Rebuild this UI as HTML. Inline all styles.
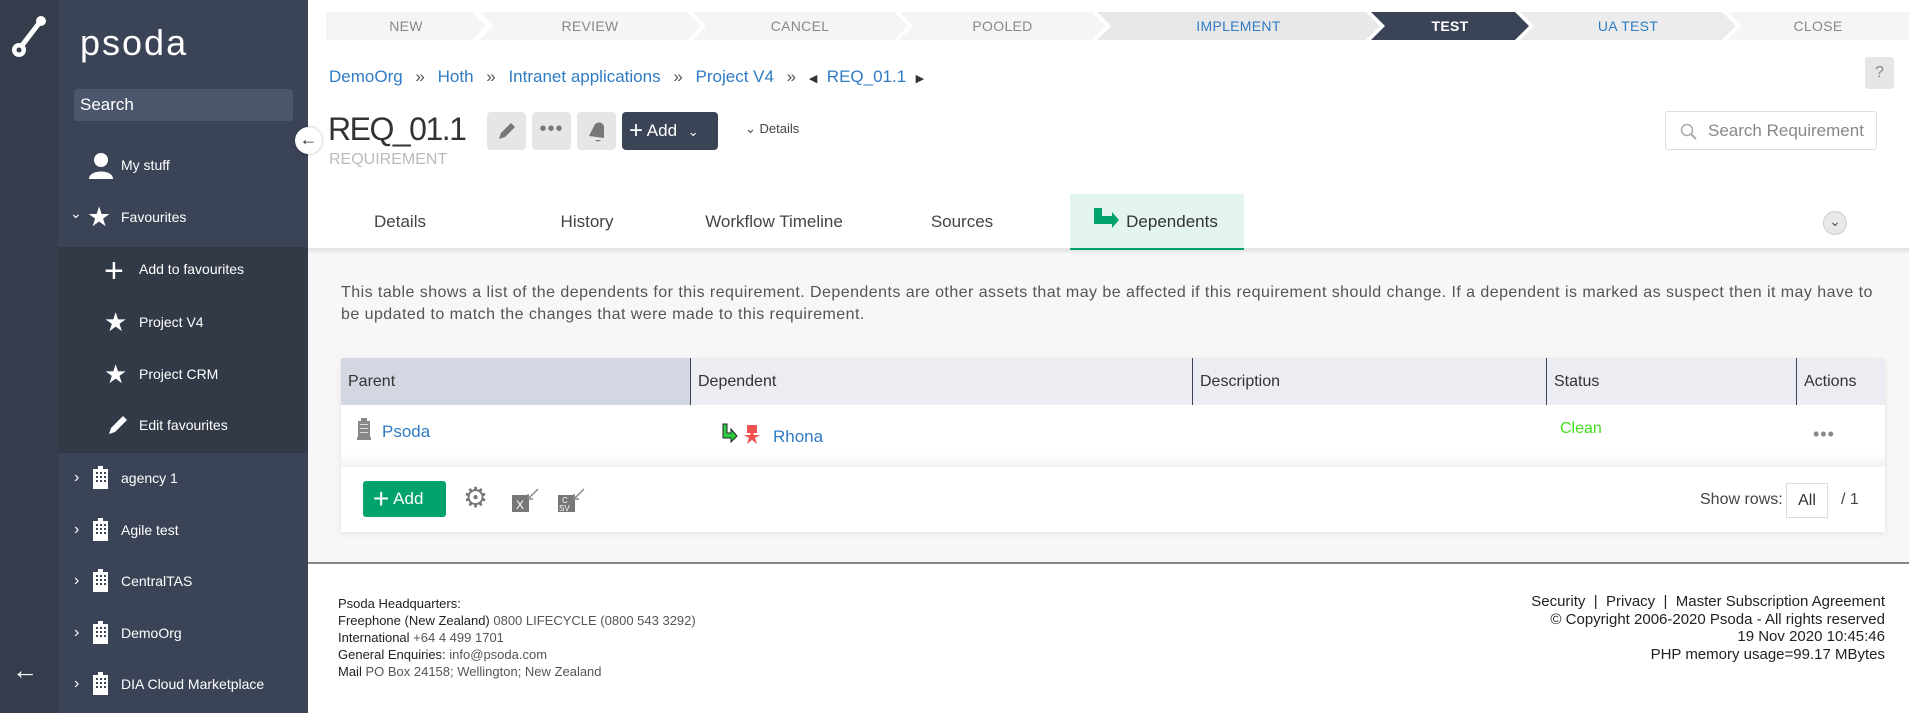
<!DOCTYPE html>
<html><head><meta charset="utf-8"><style>
*{box-sizing:border-box;margin:0;padding:0}
body{width:1909px;height:713px;overflow:hidden;position:relative;background:#fff;font-family:"Liberation Sans",sans-serif;color:#333}
.a{position:absolute}
.strip{left:0;top:0;width:58px;height:713px;background:#353c4b}
.panel{left:58px;top:0;width:250px;height:713px;background:#3b4356}
.sub{left:58px;top:247px;width:250px;height:206px;background:#323947}
.side{color:#fff;font-size:14px;white-space:nowrap}
.step{top:12px;height:28px;font-size:14px;line-height:28px;text-align:center;letter-spacing:.3px;clip-path:polygon(0 0,calc(100% - 14px) 0,100% 50%,calc(100% - 14px) 100%,0 100%,14px 50%)}
.bc{top:67px;font-size:17px;color:#2f7bc4;white-space:nowrap}
.btn{top:112px;width:39px;height:38px;background:#e6e6e6;border-radius:4px}
.tab{top:194px;height:56px;line-height:56px;font-size:17px;color:#444;text-align:center}
.th{top:358px;height:47px;line-height:47px;font-size:16px;color:#333;padding-left:7px;background:#ecedf2;border-right:1px solid #3b4356}
.ft{font-size:13px;color:#222;white-space:nowrap}
.ft span{color:#555}
.fr{right:24px;font-size:15px;color:#222;text-align:right;white-space:nowrap}
</style></head><body>
<div class="a strip"></div>
<div class="a panel"></div>
<div class="a sub"></div>
<svg class="a" style="left:8px;top:14px" width="42" height="44" viewBox="0 0 42 44"><line x1="32" y1="8" x2="12" y2="34" stroke="#fff" stroke-width="5" stroke-linecap="round"/><circle cx="33" cy="7" r="5" fill="#fff"/><circle cx="11" cy="36" r="7" fill="#fff"/><circle cx="11" cy="36" r="2.5" fill="#353c4b"/></svg>
<div class="a" style="left:80px;top:22px;font-size:36px;color:#fff;letter-spacing:2px;font-weight:normal">psoda</div>
<div class="a" style="left:74px;top:89px;width:219px;height:32px;background:#4b556b;border-radius:3px;color:#fff;font-size:17px;line-height:32px;padding-left:6px">Search</div>
<div class="a" style="left:295px;top:127px;width:27px;height:27px;border-radius:50%;background:#fff;box-shadow:0 0 3px rgba(0,0,0,.3);text-align:center;line-height:25px;font-size:18px;color:#333">←</div>
<svg class="a" style="left:88px;top:152px" width="26" height="28" viewBox="0 0 26 28"><circle cx="13" cy="8" r="7" fill="#fff"/><path d="M1 27 C1 17 25 17 25 27Z" fill="#fff"/></svg>
<div class="a side" style="left:121px;top:157px">My stuff</div>
<div class="a side" style="left:70px;top:205px;font-size:14px">⌄</div>
<div class="a side" style="left:87px;top:204px;font-size:27px;line-height:27px">★</div>
<div class="a side" style="left:121px;top:209px">Favourites</div>
<div class="a side" style="left:104px;top:254px;font-size:34px;line-height:34px;font-weight:300">+</div>
<div class="a side" style="left:139px;top:261px">Add to favourites</div>
<div class="a side" style="left:104px;top:309px;font-size:26px;line-height:26px">★</div>
<div class="a side" style="left:139px;top:314px">Project V4</div>
<div class="a side" style="left:104px;top:361px;font-size:26px;line-height:26px">★</div>
<div class="a side" style="left:139px;top:366px">Project CRM</div>
<svg class="a" style="left:106px;top:413px" width="24" height="24" viewBox="0 0 24 24"><path d="M3 21 L5 15 L17 3 L21 7 L9 19Z" fill="#fff"/></svg>
<div class="a side" style="left:139px;top:417px">Edit favourites</div>
<div class="a" style="left:0;top:0">
<div class="a side" style="left:74px;top:469px;font-size:16px">›</div><svg class="a" style="left:92px;top:466px" width="17" height="23"><rect x="6" y="0" width="5" height="3" fill="#fff"/><rect x="1" y="3" width="15" height="20" fill="#fff"/><g fill="#3b4356"><rect x="4" y="6" width="2" height="2"/><rect x="8" y="6" width="2" height="2"/><rect x="12" y="6" width="2" height="2"/><rect x="4" y="10" width="2" height="2"/><rect x="8" y="10" width="2" height="2"/><rect x="12" y="10" width="2" height="2"/><rect x="4" y="14" width="2" height="2"/><rect x="8" y="14" width="2" height="2"/><rect x="12" y="14" width="2" height="2"/></g></svg><div class="a side" style="left:121px;top:470px">agency 1</div>
<div class="a side" style="left:74px;top:521px;font-size:16px">›</div><svg class="a" style="left:92px;top:518px" width="17" height="23"><rect x="6" y="0" width="5" height="3" fill="#fff"/><rect x="1" y="3" width="15" height="20" fill="#fff"/><g fill="#3b4356"><rect x="4" y="6" width="2" height="2"/><rect x="8" y="6" width="2" height="2"/><rect x="12" y="6" width="2" height="2"/><rect x="4" y="10" width="2" height="2"/><rect x="8" y="10" width="2" height="2"/><rect x="12" y="10" width="2" height="2"/><rect x="4" y="14" width="2" height="2"/><rect x="8" y="14" width="2" height="2"/><rect x="12" y="14" width="2" height="2"/></g></svg><div class="a side" style="left:121px;top:522px">Agile test</div>
<div class="a side" style="left:74px;top:572px;font-size:16px">›</div><svg class="a" style="left:92px;top:569px" width="17" height="23"><rect x="6" y="0" width="5" height="3" fill="#fff"/><rect x="1" y="3" width="15" height="20" fill="#fff"/><g fill="#3b4356"><rect x="4" y="6" width="2" height="2"/><rect x="8" y="6" width="2" height="2"/><rect x="12" y="6" width="2" height="2"/><rect x="4" y="10" width="2" height="2"/><rect x="8" y="10" width="2" height="2"/><rect x="12" y="10" width="2" height="2"/><rect x="4" y="14" width="2" height="2"/><rect x="8" y="14" width="2" height="2"/><rect x="12" y="14" width="2" height="2"/></g></svg><div class="a side" style="left:121px;top:573px">CentralTAS</div>
<div class="a side" style="left:74px;top:624px;font-size:16px">›</div><svg class="a" style="left:92px;top:621px" width="17" height="23"><rect x="6" y="0" width="5" height="3" fill="#fff"/><rect x="1" y="3" width="15" height="20" fill="#fff"/><g fill="#3b4356"><rect x="4" y="6" width="2" height="2"/><rect x="8" y="6" width="2" height="2"/><rect x="12" y="6" width="2" height="2"/><rect x="4" y="10" width="2" height="2"/><rect x="8" y="10" width="2" height="2"/><rect x="12" y="10" width="2" height="2"/><rect x="4" y="14" width="2" height="2"/><rect x="8" y="14" width="2" height="2"/><rect x="12" y="14" width="2" height="2"/></g></svg><div class="a side" style="left:121px;top:625px">DemoOrg</div>
<div class="a side" style="left:74px;top:675px;font-size:16px">›</div><svg class="a" style="left:92px;top:672px" width="17" height="23"><rect x="6" y="0" width="5" height="3" fill="#fff"/><rect x="1" y="3" width="15" height="20" fill="#fff"/><g fill="#3b4356"><rect x="4" y="6" width="2" height="2"/><rect x="8" y="6" width="2" height="2"/><rect x="12" y="6" width="2" height="2"/><rect x="4" y="10" width="2" height="2"/><rect x="8" y="10" width="2" height="2"/><rect x="12" y="10" width="2" height="2"/><rect x="4" y="14" width="2" height="2"/><rect x="8" y="14" width="2" height="2"/><rect x="12" y="14" width="2" height="2"/></g></svg><div class="a side" style="left:121px;top:676px">DIA Cloud Marketplace</div>
</div>
<div class="a side" style="left:12px;top:655px;font-size:26px;font-weight:bold">←</div>

<div class="a" style="left:308px;top:250px;width:1601px;height:314px;background:#f7f7f7;border-bottom:2px solid #888"></div>
<div class="a" style="left:308px;top:248px;width:1601px;height:6px;background:linear-gradient(rgba(0,0,0,.12),rgba(0,0,0,0))"></div>

<div class="a step" style="left:326px;width:160px;background:#f5f5f5;color:#888;clip-path:polygon(0 0,calc(100% - 14px) 0,100% 50%,calc(100% - 14px) 100%,0 100%)">NEW</div>
<div class="a step" style="left:479px;width:222px;background:#f5f5f5;color:#888">REVIEW</div>
<div class="a step" style="left:692px;width:216px;background:#f5f5f5;color:#888">CANCEL</div>
<div class="a step" style="left:899px;width:207px;background:#f5f5f5;color:#888">POOLED</div>
<div class="a step" style="left:1097px;width:283px;background:#e8e8e8;color:#2f7bc4">IMPLEMENT</div>
<div class="a step" style="left:1371px;width:158px;background:#3b4356;color:#fff;font-weight:bold">TEST</div>
<div class="a step" style="left:1520px;width:216px;background:#ececec;color:#2f7bc4">UA TEST</div>
<div class="a step" style="left:1727px;width:182px;background:#f5f5f5;color:#888;clip-path:polygon(0 0,100% 0,100% 100%,0 100%,14px 50%)">CLOSE</div>

<div class="a bc" style="left:329px">DemoOrg <span style="color:#555;margin:0 8px">»</span> Hoth <span style="color:#555;margin:0 8px">»</span> Intranet applications <span style="color:#555;margin:0 8px">»</span> Project V4 <span style="color:#555;margin:0 8px">»</span> <span style="color:#333;font-size:11px">◀</span> &nbsp;REQ_01.1 &nbsp;<span style="color:#333;font-size:11px">▶</span></div>
<div class="a" style="left:1865px;top:57px;width:29px;height:32px;background:#e6e6e6;border-radius:3px;color:#888;text-align:center;line-height:32px;font-size:16px">?</div>

<div class="a" style="left:328px;top:111px;font-size:32px;color:#333;letter-spacing:-1.5px">REQ_01.1</div>
<div class="a" style="left:329px;top:151px;font-size:16px;color:#bbb">REQUIREMENT</div>
<div class="a btn" style="left:487px"><svg width="39" height="38"><path d="M12 27 L14 21 L24 11 L28 15 L18 25Z" fill="#777"/></svg></div>
<div class="a btn" style="left:532px;color:#777;text-align:center;line-height:34px;font-size:20px;letter-spacing:1px">•••</div>
<div class="a btn" style="left:577px"><svg width="39" height="38"><path d="M12 24 L18 12 Q24 8 27 14 L27 26Z M18 28 Q21 31 24 28Z" fill="#777"/></svg></div>
<div class="a" style="left:622px;top:112px;width:96px;height:38px;background:#3b4356;border-radius:4px;color:#fff;font-size:17px;line-height:38px;padding-left:7px"><span style="font-size:24px;vertical-align:-2px">+</span> Add <span style="font-size:13px;margin-left:6px">⌄</span></div>
<div class="a" style="left:745px;top:121px;font-size:13px;color:#444">⌄ Details</div>
<div class="a" style="left:1665px;top:111px;width:212px;height:39px;border:1px solid #ddd;border-radius:3px;color:#888;font-size:17px;line-height:37px;padding-left:42px">Search Requirement
<svg class="a" style="left:14px;top:11px" width="18" height="18"><circle cx="7" cy="7" r="5.5" fill="none" stroke="#aaa" stroke-width="1.5"/><line x1="11" y1="11" x2="16" y2="16" stroke="#aaa" stroke-width="2"/></svg></div>

<div class="a tab" style="left:330px;width:140px">Details</div>
<div class="a tab" style="left:517px;width:140px">History</div>
<div class="a tab" style="left:684px;width:180px">Workflow Timeline</div>
<div class="a tab" style="left:892px;width:140px">Sources</div>
<div class="a tab" style="left:1070px;width:174px;background:#e4f5ee;border-bottom:2px solid #00a36e;color:#333;padding-left:30px">Dependents
<svg class="a" style="left:22px;top:12px" width="28" height="30"><path d="M2 2 L10 2 L10 10 L20 10 L20 6 L27 14 L20 22 L20 18 L2 18Z" fill="#00a36e"/></svg></div>
<div class="a" style="left:1823px;top:211px;width:24px;height:24px;border-radius:50%;background:#e8e8e8;border:1px solid #ccc;text-align:center;font-size:14px;line-height:18px;color:#555">⌄</div>

<div class="a" style="left:341px;top:282px;width:1545px;font-size:16px;line-height:22px;color:#555;letter-spacing:.45px">This table shows a list of the dependents for this requirement. Dependents are other assets that may be affected if this requirement should change. If a dependent is marked as suspect then it may have to be updated to match the changes that were made to this requirement.</div>

<div class="a" style="left:341px;top:358px;width:1544px;height:174px;background:#fff;box-shadow:0 2px 6px rgba(0,0,0,.08)"></div>
<div class="a th" style="left:341px;width:350px;background:#d3d7e1">Parent</div>
<div class="a th" style="left:691px;width:502px">Dependent</div>
<div class="a th" style="left:1193px;width:354px">Description</div>
<div class="a th" style="left:1547px;width:250px">Status</div>
<div class="a th" style="left:1797px;width:88px;border-right:none">Actions</div>
<div class="a" style="left:341px;top:454px;width:1544px;height:13px;background:linear-gradient(#fff,#f2f2f2)"></div>
<svg class="a" style="left:357px;top:418px" width="14" height="22"><rect x="4" y="0" width="6" height="3" fill="#888"/><rect x="1" y="3" width="12" height="16" fill="#888"/><rect x="0" y="19" width="14" height="3" fill="#888"/><g fill="#ddd"><rect x="3" y="6" width="8" height="1"/><rect x="3" y="10" width="8" height="1"/><rect x="3" y="14" width="8" height="1"/></g></svg>
<div class="a" style="left:382px;top:422px;font-size:17px;color:#2f7bc4">Psoda</div>
<svg class="a" style="left:722px;top:423px" width="40" height="22"><path d="M1 1 L5 1 L5 10 L9 10 L9 6 L15 13 L9 19 L9 15 L1 15Z" fill="#2ecc40" stroke="#222" stroke-width="1"/><path d="M25 2 L35 2 L35 10 L25 10Z" fill="#f05050"/><path d="M30 6 L32 12 L38 12 L33 15 L35 21 L30 17 L25 21 L27 15 L22 12 L28 12Z" fill="#f05050"/></svg>
<div class="a" style="left:773px;top:427px;font-size:17px;color:#2f7bc4">Rhona</div>
<div class="a" style="left:1560px;top:420px;font-size:16px;color:#44dd22">Clean</div>
<div class="a" style="left:1813px;top:424px;font-size:18px;color:#888;letter-spacing:1px">•••</div>

<div class="a" style="left:363px;top:481px;width:83px;height:36px;background:#00a36e;border-radius:3px;color:#fff;font-size:17px;line-height:36px;padding-left:10px"><span style="font-size:28px;vertical-align:-4px;font-weight:300">+</span> Add</div>
<div class="a" style="left:463px;top:484px;font-size:28px;color:#777;line-height:28px">⚙</div>
<svg class="a" style="left:511px;top:486px" width="30" height="30"><rect x="1" y="9" width="17" height="17" fill="#777"/><text x="5" y="23" font-size="12" fill="#fff" font-family="Liberation Sans">X</text><path d="M27 3 L17 13 M17 8 L17 13 L22 13" stroke="#888" stroke-width="1.5" fill="none"/></svg>
<svg class="a" style="left:557px;top:486px" width="30" height="30"><rect x="1" y="9" width="17" height="17" fill="#777"/><text x="5" y="17" font-size="8" fill="#fff" font-family="Liberation Sans">C</text><text x="2" y="25" font-size="8" fill="#fff" font-family="Liberation Sans">SV</text><path d="M27 3 L17 13 M17 8 L17 13 L22 13" stroke="#888" stroke-width="1.5" fill="none"/></svg>
<div class="a" style="left:1700px;top:491px;font-size:16px;color:#444">Show rows:</div>
<div class="a" style="left:1786px;top:483px;width:42px;height:35px;border:1px solid #ddd;background:#fff;font-size:16px;line-height:33px;text-align:center;color:#333">All</div>
<div class="a" style="left:1841px;top:491px;font-size:16px;color:#444">/ 1</div>

<div class="a ft" style="left:338px;top:595px;line-height:17px">Psoda Headquarters:<br>Freephone (New Zealand) <span>0800 LIFECYCLE (0800 543 3292)</span><br>International <span>+64 4 499 1701</span><br>General Enquiries: <span>info@psoda.com</span><br>Mail <span>PO Box 24158; Wellington; New Zealand</span></div>
<div class="a fr" style="top:593px;line-height:17.5px">Security &nbsp;| &nbsp;Privacy &nbsp;| &nbsp;Master Subscription Agreement<br>© Copyright 2006-2020 Psoda - All rights reserved<br>19 Nov 2020 10:45:46<br>PHP memory usage=99.17 MBytes</div>
</body></html>
